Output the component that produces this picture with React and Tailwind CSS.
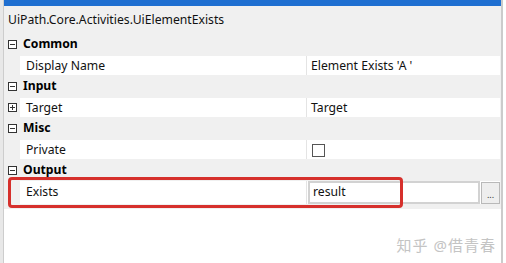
const Box = ({ plus }) => (
  <span className="relative inline-block w-[9px] h-[9px] border border-[#333] bg-white shrink-0">
    <span className="absolute left-[1px] right-[1px] top-[3px] h-px bg-[#333]"></span>
    {plus && <span className="absolute top-[1px] bottom-[1px] left-[3px] w-px bg-[#333]"></span>}
  </span>
);

const Category = ({ name }) => (
  <div className="h-[21px] flex items-center pl-[4px]">
    <Box />
    <span className="ml-[6px] font-bold text-[12.2px] text-black">{name}</span>
  </div>
);

const Row = ({ label, expandable, children }) => (
  <div className="h-[21px] flex items-stretch">
    <div className="w-[15px] flex items-center pl-[4px]">{expandable && <Box plus />}</div>
    <div className="flex-1 flex bg-white my-[1px] ml-[1px] mr-[1px]">
      <div className="w-[287px] pl-[6px] pt-px flex items-center text-[12.2px] text-[#111] border-r border-[#e4e4e4]">{label}</div>
      <div className="flex-1 flex items-center pl-[4px] pt-px text-[12.2px] text-[#111]">{children}</div>
    </div>
  </div>
);

export default function App() {
  return (
    <div className="w-[506px] h-[263px] bg-white overflow-hidden" style={{ fontFamily: '"Noto Sans", "Noto Sans CJK SC", sans-serif' }}>
      <div className="flex h-full">
        <div className="w-[3px] bg-[#e8e8e8]"></div>
        <div className="w-[500px] flex flex-col border-l border-[#cdcdcd] border-r-2 border-r-[#cbcbcb]">
          <div className="h-[6px] bg-[#1f6fd1]"></div>
          <div className="bg-[#f0f0f0] relative">
            <div className="h-[27px] flex items-center pl-[4px] pt-px text-[12.2px] text-[#111]">UiPath.Core.Activities.UiElementExists</div>
            <div className="h-px"></div>
            <Category name="Common" />
            <Row label="Display Name">Element Exists 'A '</Row>
            <Category name="Input" />
            <Row label="Target" expandable>Target</Row>
            <Category name="Misc" />
            <Row label="Private">
              <span className="ml-[1px] w-[13px] h-[13px] border border-[#555] bg-white"></span>
            </Row>
            <Category name="Output" />
            <div className="h-[23px] flex items-stretch">
              <div className="w-[15px]"></div>
              <div className="flex-1 flex bg-white ml-[1px] mr-[1px]">
                <div className="w-[287px] pl-[6px] flex items-center text-[12.2px] text-[#111] border-r border-[#e4e4e4]">Exists</div>
                <div className="flex-1 flex items-center gap-[1px] pl-[1px]">
                  <div className="flex-1 h-[23px] border-2 border-[#d2d2d2] bg-white flex items-center pl-[3px] text-[12.2px] text-[#111]">result</div>
                  <div className="w-[19px] h-[22px] border border-[#b9b9b9] bg-[#eeeeee] flex items-end justify-center pb-[4px] text-[9px] leading-none text-[#333]">...</div>
                </div>
              </div>
            </div>
            <div className="h-[5px]"></div>
            <div className="absolute left-[4px] top-[171px] w-[395px] h-[31px] border-[3px] border-[#d6302c] rounded-[4px]"></div>
          </div>
          <div className="flex-1 bg-white flex justify-end items-start pt-[25px] pr-[5px]">
            <span className="text-[15px] text-[#c4c4c4] tracking-[1px]">知乎 @借青春</span>
          </div>
        </div>
        <div className="flex-1 bg-white"></div>
      </div>
    </div>
  );
}
